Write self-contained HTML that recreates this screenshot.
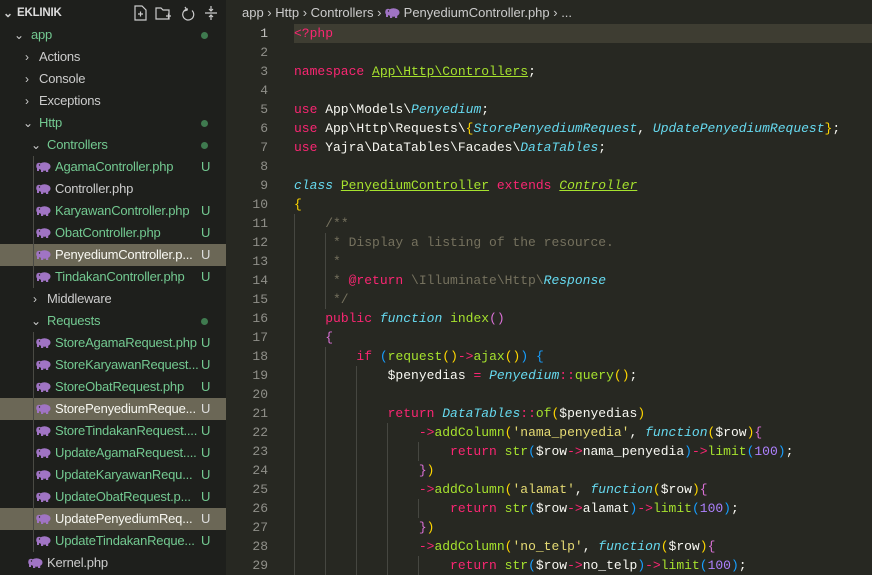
<!DOCTYPE html>
<html><head><meta charset="utf-8"><style>
*{margin:0;padding:0;box-sizing:border-box}
body{width:872px;height:575px;overflow:hidden;background:#272822;font-family:"Liberation Sans",sans-serif;position:relative}
#side{position:absolute;left:0;top:0;width:226px;height:575px;background:#1e1f1c;color:#ccc;font-size:13px;letter-spacing:-0.2px}
.row{position:absolute;left:0;width:226px;height:22px;line-height:22px;white-space:nowrap}
.row>span:not(.chev):not(.u):not(.dot){overflow:hidden;max-width:144px}
.sel{background:#6b6756;color:#f8f8f2}
.g{color:#73c991}
.u{position:absolute;left:201px;color:#73c991}
.sel .u{color:#ddd}
.dot{position:absolute;left:201px;top:8px;width:7px;height:7px;border-radius:50%;background:#3f7a4f}
.chev{position:absolute;top:0;color:#ccc;font-size:12px}
.el{position:absolute;top:6px;width:15px;height:10px}
#ed{position:absolute;left:227px;top:0;width:645px;height:575px}
.crumb{position:absolute;left:15px;top:5px;font-size:13px;color:#ccc;white-space:nowrap}
.ln{position:absolute;left:0;width:41px;text-align:right;font-family:"Liberation Mono",monospace;font-size:13px;color:#90908a;height:19px;line-height:19px}
.cl{position:absolute;left:67px;font-family:"Liberation Mono",monospace;font-size:13px;color:#f8f8f2;height:19px;line-height:19px;white-space:pre}
.k{color:#f92672}.n{color:#a6e22e}.c{color:#66d9ef;font-style:italic}.cm{color:#75715e}.s{color:#e6db74}.num{color:#ae81ff}
.y{color:#ffd700}.p{color:#da70d6}.b{color:#179fff}
.ul{text-decoration:underline;text-decoration-color:#a6e22e}
.gd{position:absolute;width:1px;background:#464741}
</style></head><body>
<svg width="0" height="0" style="position:absolute"><defs><symbol id="e" viewBox="0 0 15 10"><ellipse cx="8.5" cy="4.5" rx="6" ry="4.3" fill="#a074c4"/><ellipse cx="3" cy="4" rx="2.8" ry="3.3" fill="#a074c4"/><rect x="1" y="5" width="2" height="4" fill="#a074c4"/><rect x="5" y="6" width="2.2" height="4" fill="#a074c4"/><rect x="10" y="6" width="2.2" height="4" fill="#a074c4"/><circle cx="3.5" cy="3" r=".7" fill="#1e1f1c"/></symbol></defs></svg>
<div id="side">
<div class="row" style="top:2px;font-weight:bold;font-size:11.5px;color:#ddd"><span class="chev" style="left:3px">&#8964;</span><span style="position:absolute;left:17px">EKLINIK</span>
<svg style="position:absolute;left:133px;top:3px" width="90" height="16" fill="none" stroke="#ccc" stroke-width="1.2"><path d="M2 1h7l4 4v10H2z M5 9h5 M7.5 6.5v5"/><path d="M23 3h5l2 2h6v9H23z M33 11h5 M35.5 8.5v5" /><path d="M55 4a5.5 5.5 0 1 0 4 1.5 M52 2l2 3-3 1"/><path d="M72 8h12 M78 1v5 M76 4l2 2 2-2 M78 15v-5 M76 12l2-2 2 2"/></svg></div>
<div class="row g" style="top:24px"><span class="chev" style="left:14px;color:#ccc">&#8964;</span><span style="position:absolute;left:31px">app</span><span class="dot"></span></div>
<div class="row" style="top:46px"><span class="chev" style="left:25px">&#8250;</span><span style="position:absolute;left:39px">Actions</span></div>
<div class="row" style="top:68px"><span class="chev" style="left:25px">&#8250;</span><span style="position:absolute;left:39px">Console</span></div>
<div class="row" style="top:90px"><span class="chev" style="left:25px">&#8250;</span><span style="position:absolute;left:39px">Exceptions</span></div>
<div class="row g" style="top:112px"><span class="chev" style="left:23px;color:#ccc">&#8964;</span><span style="position:absolute;left:39px">Http</span><span class="dot"></span></div>
<div class="row g" style="top:134px"><span class="chev" style="left:31px;color:#ccc">&#8964;</span><span style="position:absolute;left:47px">Controllers</span><span class="dot"></span></div>
<div class="row g" style="top:156px"><svg class="el" style="left:36px"><use href="#e"/></svg><span style="position:absolute;left:55px">AgamaController.php</span><span class="u">U</span></div>
<div class="row" style="top:178px"><svg class="el" style="left:36px"><use href="#e"/></svg><span style="position:absolute;left:55px">Controller.php</span></div>
<div class="row g" style="top:200px"><svg class="el" style="left:36px"><use href="#e"/></svg><span style="position:absolute;left:55px">KaryawanController.php</span><span class="u">U</span></div>
<div class="row g" style="top:222px"><svg class="el" style="left:36px"><use href="#e"/></svg><span style="position:absolute;left:55px">ObatController.php</span><span class="u">U</span></div>
<div class="row sel" style="top:244px"><svg class="el" style="left:36px"><use href="#e"/></svg><span style="position:absolute;left:55px">PenyediumController.p...</span><span class="u">U</span></div>
<div class="row g" style="top:266px"><svg class="el" style="left:36px"><use href="#e"/></svg><span style="position:absolute;left:55px">TindakanController.php</span><span class="u">U</span></div>
<div class="row" style="top:288px"><span class="chev" style="left:33px">&#8250;</span><span style="position:absolute;left:47px">Middleware</span></div>
<div class="row g" style="top:310px"><span class="chev" style="left:31px;color:#ccc">&#8964;</span><span style="position:absolute;left:47px">Requests</span><span class="dot"></span></div>
<div class="row g" style="top:332px"><svg class="el" style="left:36px"><use href="#e"/></svg><span style="position:absolute;left:55px">StoreAgamaRequest.php</span><span class="u">U</span></div>
<div class="row g" style="top:354px"><svg class="el" style="left:36px"><use href="#e"/></svg><span style="position:absolute;left:55px">StoreKaryawanRequest...</span><span class="u">U</span></div>
<div class="row g" style="top:376px"><svg class="el" style="left:36px"><use href="#e"/></svg><span style="position:absolute;left:55px">StoreObatRequest.php</span><span class="u">U</span></div>
<div class="row sel" style="top:398px"><svg class="el" style="left:36px"><use href="#e"/></svg><span style="position:absolute;left:55px">StorePenyediumReque...</span><span class="u">U</span></div>
<div class="row g" style="top:420px"><svg class="el" style="left:36px"><use href="#e"/></svg><span style="position:absolute;left:55px">StoreTindakanRequest....</span><span class="u">U</span></div>
<div class="row g" style="top:442px"><svg class="el" style="left:36px"><use href="#e"/></svg><span style="position:absolute;left:55px">UpdateAgamaRequest....</span><span class="u">U</span></div>
<div class="row g" style="top:464px"><svg class="el" style="left:36px"><use href="#e"/></svg><span style="position:absolute;left:55px">UpdateKaryawanRequ...</span><span class="u">U</span></div>
<div class="row g" style="top:486px"><svg class="el" style="left:36px"><use href="#e"/></svg><span style="position:absolute;left:55px">UpdateObatRequest.p...</span><span class="u">U</span></div>
<div class="row sel" style="top:508px"><svg class="el" style="left:36px"><use href="#e"/></svg><span style="position:absolute;left:55px">UpdatePenyediumReq...</span><span class="u">U</span></div>
<div class="row g" style="top:530px"><svg class="el" style="left:36px"><use href="#e"/></svg><span style="position:absolute;left:55px">UpdateTindakanReque...</span><span class="u">U</span></div>
<div class="row" style="top:552px"><svg class="el" style="left:28px"><use href="#e"/></svg><span style="position:absolute;left:47px">Kernel.php</span></div>
<div class="gd" style="left:33px;top:156px;height:132px;background:#4a4a44"></div>
<div class="gd" style="left:33px;top:332px;height:220px;background:#4a4a44"></div>
</div>
<div id="ed">
<div class="crumb">app &#8250; Http &#8250; Controllers &#8250; <svg width="15" height="10" style="vertical-align:-1px"><use href="#e"/></svg> PenyediumController.php &#8250; ...</div>
<div style="position:absolute;left:67px;top:24px;width:578px;height:19px;background:#3e3d32"></div>
<div class="gd" style="left:67px;top:214px;height:361px"></div>
<div class="gd" style="left:98px;top:233px;height:76px"></div>
<div class="gd" style="left:98px;top:347px;height:228px"></div>
<div class="gd" style="left:129px;top:366px;height:209px"></div>
<div class="gd" style="left:160px;top:423px;height:152px"></div>
<div class="gd" style="left:191px;top:442px;height:19px"></div>
<div class="gd" style="left:191px;top:499px;height:19px"></div>
<div class="gd" style="left:191px;top:556px;height:19px"></div>
<div id="lines"></div>
</div>
<script>
var L=[
'<span class="k">&lt;?php</span>',
'',
'<span class="k">namespace</span> <span class="n ul">App\\Http\\Controllers</span>;',
'',
'<span class="k">use</span> App\\Models\\<span class="c">Penyedium</span>;',
'<span class="k">use</span> App\\Http\\Requests\\<span class="y">{</span><span class="c">StorePenyediumRequest</span>, <span class="c">UpdatePenyediumRequest</span><span class="y">}</span>;',
'<span class="k">use</span> Yajra\\DataTables\\Facades\\<span class="c">DataTables</span>;',
'',
'<span class="c">class</span> <span class="n ul">PenyediumController</span> <span class="k">extends</span> <span class="n ul" style="font-style:italic">Controller</span>',
'<span class="y">{</span>',
'    <span class="cm">/**</span>',
'<span class="cm">     * Display a listing of the resource.</span>',
'<span class="cm">     *</span>',
'<span class="cm">     * </span><span class="k">@return</span><span class="cm"> \\Illuminate\\Http\\</span><span class="c">Response</span>',
'<span class="cm">     */</span>',
'    <span class="k">public</span> <span class="c">function</span> <span class="n">index</span><span class="p">()</span>',
'    <span class="p">{</span>',
'        <span class="k">if</span> <span class="b">(</span><span class="n">request</span><span class="y">()</span><span class="k">-&gt;</span><span class="n">ajax</span><span class="y">()</span><span class="b">)</span> <span class="b">{</span>',
'            $penyedias <span class="k">=</span> <span class="c">Penyedium</span><span class="k">::</span><span class="n">query</span><span class="y">()</span>;',
'',
'            <span class="k">return</span> <span class="c">DataTables</span><span class="k">::</span><span class="n">of</span><span class="y">(</span>$penyedias<span class="y">)</span>',
'                <span class="k">-&gt;</span><span class="n">addColumn</span><span class="y">(</span><span class="s">\'nama_penyedia\'</span>, <span class="c">function</span><span class="y">(</span>$row<span class="y">)</span><span class="p">{</span>',
'                    <span class="k">return</span> <span class="n">str</span><span class="b">(</span>$row<span class="k">-&gt;</span>nama_penyedia<span class="b">)</span><span class="k">-&gt;</span><span class="n">limit</span><span class="b">(</span><span class="num">100</span><span class="b">)</span>;',
'                <span class="p">}</span><span class="y">)</span>',
'                <span class="k">-&gt;</span><span class="n">addColumn</span><span class="y">(</span><span class="s">\'alamat\'</span>, <span class="c">function</span><span class="y">(</span>$row<span class="y">)</span><span class="p">{</span>',
'                    <span class="k">return</span> <span class="n">str</span><span class="b">(</span>$row<span class="k">-&gt;</span>alamat<span class="b">)</span><span class="k">-&gt;</span><span class="n">limit</span><span class="b">(</span><span class="num">100</span><span class="b">)</span>;',
'                <span class="p">}</span><span class="y">)</span>',
'                <span class="k">-&gt;</span><span class="n">addColumn</span><span class="y">(</span><span class="s">\'no_telp\'</span>, <span class="c">function</span><span class="y">(</span>$row<span class="y">)</span><span class="p">{</span>',
'                    <span class="k">return</span> <span class="n">str</span><span class="b">(</span>$row<span class="k">-&gt;</span>no_telp<span class="b">)</span><span class="k">-&gt;</span><span class="n">limit</span><span class="b">(</span><span class="num">100</span><span class="b">)</span>;'
];
var h='';
for(var i=0;i<L.length;i++){var t=24+i*19;h+='<div class="ln" style="top:'+t+'px'+(i==0?';color:#c2c2bf':'')+'">'+(i+1)+'</div><div class="cl" style="top:'+t+'px">'+L[i]+'</div>';}
document.getElementById('lines').innerHTML=h;
</script>
</body></html>
